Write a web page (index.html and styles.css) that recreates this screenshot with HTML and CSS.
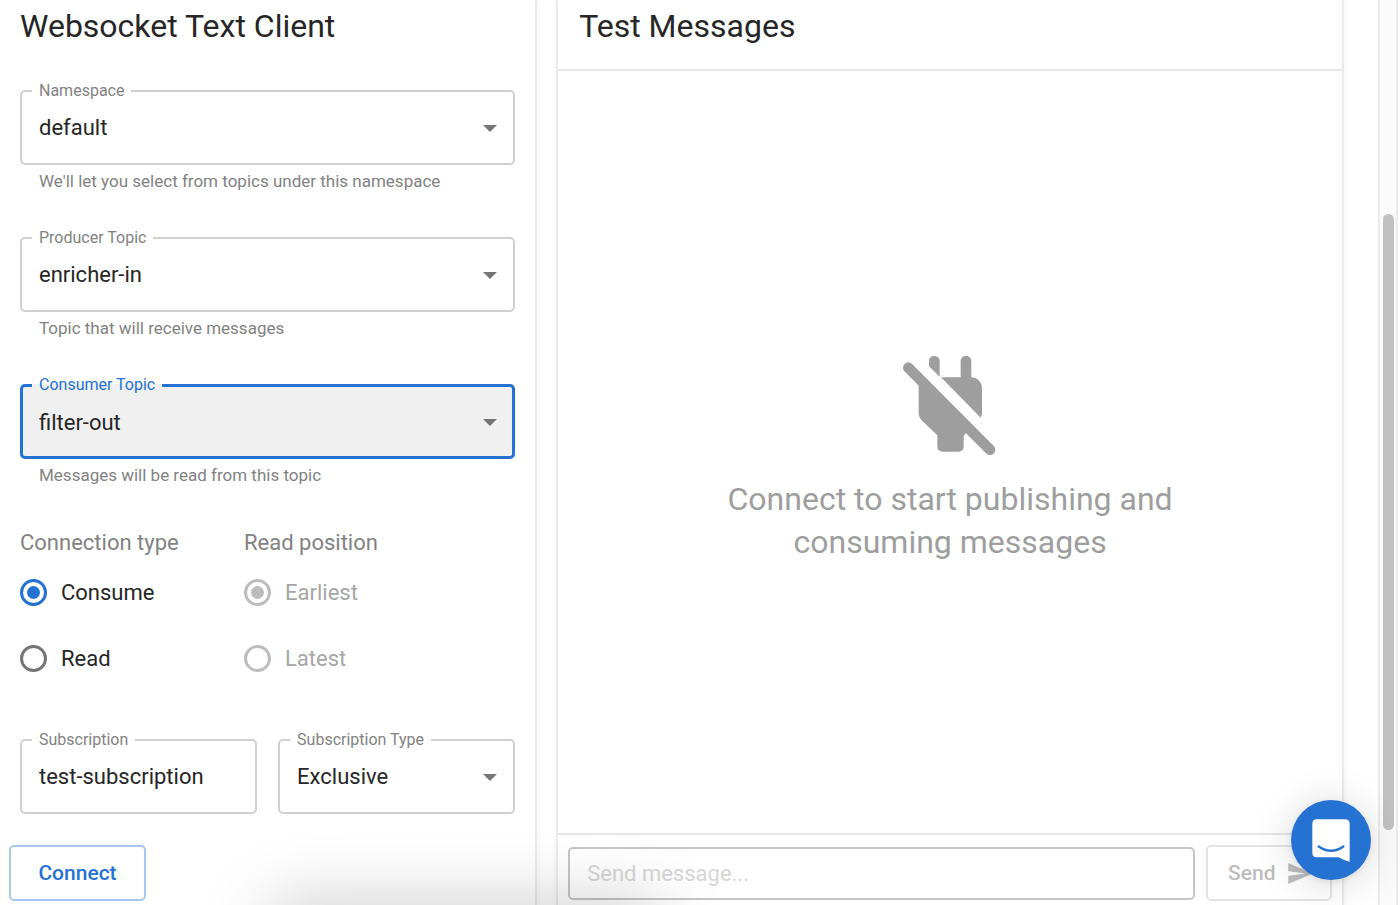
FILE: index.html
```html
<!DOCTYPE html>
<html lang="en">
  <head>
    <meta charset="UTF-8" />
    <meta name="viewport" content="width=device-width, initial-scale=1" />
    <title>Websocket Text Client</title>
    <link rel="stylesheet" href="styles.css">
  </head>
  <body>
    <div class="page">
      <main class="content">
        <form class="panel client">
          <h1 class="title">Websocket Text Client</h1>

          <fieldset class="field">
            <legend><label for="namespace">Namespace</label></legend>
            <div class="select-box">
              <select id="namespace"><option>default</option></select>
            </div>
          </fieldset>
          <p class="helper">We'll let you select from topics under this namespace</p>

          <fieldset class="field">
            <legend><label for="producer">Producer Topic</label></legend>
            <div class="select-box">
              <select id="producer"><option>enricher-in</option></select>
            </div>
          </fieldset>
          <p class="helper">Topic that will receive messages</p>

          <fieldset class="field focused">
            <legend><label for="consumer">Consumer Topic</label></legend>
            <div class="select-box">
              <select id="consumer"><option>filter-out</option></select>
            </div>
          </fieldset>
          <p class="helper">Messages will be read from this topic</p>

          <div class="radio-groups">
            <div role="radiogroup" aria-labelledby="connection-type">
              <div class="group-label" id="connection-type">Connection type</div>
              <label class="radio"><input type="radio" name="connection" checked />Consume</label>
              <label class="radio"><input type="radio" name="connection" />Read</label>
            </div>
            <div role="radiogroup" aria-labelledby="read-position">
              <div class="group-label" id="read-position">Read position</div>
              <label class="radio disabled"><input type="radio" name="position" checked disabled />Earliest</label>
              <label class="radio disabled"><input type="radio" name="position" disabled />Latest</label>
            </div>
          </div>

          <div class="subscription">
            <fieldset class="field">
              <legend><label for="subscription">Subscription</label></legend>
              <input type="text" id="subscription" value="test-subscription" />
            </fieldset>
            <fieldset class="field">
              <legend><label for="subscription-type">Subscription Type</label></legend>
              <div class="select-box">
                <select id="subscription-type"><option>Exclusive</option></select>
              </div>
            </fieldset>
          </div>

          <button type="button" class="btn connect-btn">Connect</button>
        </form>

        <section class="panel messages">
          <header class="messages-header">
            <h2 class="title">Test Messages</h2>
          </header>
          <div class="empty">
            <!-- power off -->
            <svg class="empty-icon" viewBox="120 70 300 315" aria-hidden="true">
              <path d="M207 110V94a16 16 0 0 1 32 0v47z" />
              <path d="M243 143h59V94a16 16 0 0 1 32 0v49a32 32 0 0 1 32 32v75q0 8-4 14z" />
              <path d="M176 160v90q0 12 8 21l48 46v33q0 16 16 16h47q16 0 16-16v-32l8-9z" />
              <path class="slash" d="M145 114l245 246" />
            </svg>
            <p class="empty-text">Connect to start publishing and consuming messages</p>
          </div>
          <div class="composer">
            <input type="text" class="message-input" placeholder="Send message..." aria-label="Message" />
            <button type="button" class="btn send-btn" disabled>
              Send
              <svg class="send-icon" viewBox="2 3 21 18" aria-hidden="true">
                <path d="M2.01 21L23 12 2.01 3 2 10l15 2-15 2z" />
              </svg>
            </button>
          </div>
        </section>
      </main>

      <div class="scrollbar"><div class="thumb"></div></div>
    </div>

    <div class="bottom-shadow"></div>

    <button type="button" class="chat-btn" aria-label="Open chat">
      <svg viewBox="396 116 115 128" aria-hidden="true">
        <path d="M410 116h86q14 0 14 14v114q-18-4-34-13h-66q-13 0-13-14v-87q0-14 13-14z" />
        <path class="smile" d="M416 198q38 26 75 0" />
      </svg>
    </button>
  </body>
</html>
```

FILE: styles.css
```css
* {
  box-sizing: border-box;
}

body {
  margin: 0;
  font-family: Roboto, "Liberation Sans", sans-serif;
  color: #262626;
  background: #fff;
  overflow: hidden;
}

.page {
  display: flex;
  height: 100vh;
  padding-right: 2px;
}

.content {
  flex: 1;
  display: grid;
  grid-template-columns: 15fr 22fr;
  gap: 19px;
  padding-right: 34px;
}

.panel {
  min-width: 0;
  border: 0 solid #ebebeb;
  box-shadow: 0 0 6px rgba(0, 0, 0, 0.06);
}

.title {
  margin: 0;
  font-size: 32px;
  font-weight: 400;
  line-height: 40px;
}

/* left side */
.client {
  padding: 6px 20px 4px;
  border-right-width: 2px;
}

.client .title {
  margin-bottom: 35px;
}

.field {
  min-width: 0;
  margin: 0;
  padding: 0 10px;
  border: 2px solid #d0d0d0;
  border-radius: 5px;
}

.field legend {
  padding: 0 7px;
  color: #828282;
  font-size: 16px;
  line-height: 20px;
}

.field select,
.field input {
  display: block;
  width: 100%;
  height: 70px;
  margin-top: -8px;
  padding: 0 7px 2px;
  border: none;
  outline: none;
  appearance: none;
  background: transparent;
  color: #262626;
  font-family: inherit;
  font-size: 22px;
}

.select-box {
  position: relative;
}

.select-box::after {
  content: "";
  position: absolute;
  top: 32px;
  right: 6px;
  border: 7px solid transparent;
  border-top-color: #757575;
  border-bottom: none;
  pointer-events: none;
}

.field.focused {
  padding: 0 9px;
  border: 3px solid #2572d3;
  background: #f0f0f0;
}

.field.focused legend {
  color: #2572d3;
}

.field.focused select {
  height: 69px;
  padding: 2px 7px 0;
}

.helper {
  margin: 6px 19px 37px;
  color: #828282;
  font-size: 17px;
  line-height: 20px;
}

.radio-groups {
  display: grid;
  grid-template-columns: 224px 1fr;
  margin-top: 46px;
  margin-bottom: 39px;
}

.group-label {
  margin-bottom: 4px;
  color: #828282;
  font-size: 22px;
  line-height: 24px;
}

.radio {
  display: flex;
  align-items: center;
  gap: 14px;
  height: 66px;
  font-size: 22px;
}

.radio input {
  appearance: none;
  width: 27px;
  height: 27px;
  margin: 0;
  padding: 4px;
  border: 3px solid #757575;
  border-radius: 50%;
}

.radio input:checked {
  border-color: #2572d3;
  background: #2572d3 content-box;
}

.radio.disabled {
  color: #a6a6a6;
}

.radio.disabled input {
  border-color: #bdbdbd;
}

.radio.disabled input:checked {
  background-color: #bdbdbd;
}

.subscription {
  display: grid;
  grid-template-columns: 1fr 1fr;
  gap: 21px;
  margin-bottom: 31px;
}

.btn {
  height: 56px;
  border: 2px solid #a6c8f0;
  border-radius: 5px;
  background: transparent;
  color: #2572d3;
  font-family: inherit;
  font-size: 21px;
  font-weight: 500;
}

.connect-btn {
  display: block;
  width: 137px;
  margin-left: -11px;
}

/* right side */
.messages {
  display: flex;
  flex-direction: column;
  border-left-width: 2px;
  border-right-width: 2px;
}

.messages-header {
  padding: 6px 21px 23px;
  border-bottom: 2px solid #e6e6e6;
}

.empty {
  flex: 1;
  display: flex;
  flex-direction: column;
  align-items: center;
  justify-content: center;
  gap: 20px;
  padding-top: 13px;
}

.empty-icon {
  width: 100px;
  height: 105px;
  fill: #9e9e9e;
}

.empty-icon .slash {
  stroke: #9e9e9e;
  stroke-width: 32;
  stroke-linecap: round;
}

.empty-text {
  max-width: 500px;
  margin: 0;
  color: #9e9e9e;
  font-size: 32px;
  line-height: 43px;
  text-align: center;
}

.composer {
  display: flex;
  align-items: center;
  gap: 11px;
  padding: 10px 10px 4px;
  border-top: 2px solid #e6e6e6;
}

.message-input {
  flex: 1;
  min-width: 0;
  height: 53px;
  padding: 0 17px;
  border: 2px solid #c6c6c6;
  border-radius: 5px;
  background: transparent;
  font-family: inherit;
  font-size: 22px;
}

.message-input::placeholder {
  color: #d6d6d6;
}

.send-btn {
  display: flex;
  align-items: center;
  gap: 12px;
  width: 126px;
  padding: 0 20px;
  border-color: #e4e4e4;
  color: #bdbdbd;
}

.send-icon {
  flex: none;
  width: 25px;
  height: 21px;
  fill: #bdbdbd;
}

.scrollbar {
  width: 20px;
  padding: 214px 3px 75px;
  border: solid #ebebeb;
  border-width: 0 2px;
  background: #fafafa;
}

.thumb {
  width: 11px;
  height: 100%;
  margin: 0 auto;
  border-radius: 6px;
  background: #c1c1c1;
}

/* overlays */
.bottom-shadow {
  position: fixed;
  bottom: -50px;
  left: 270px;
  width: 390px;
  height: 50px;
  box-shadow: 0 0 70px rgba(0, 0, 0, 0.24);
  pointer-events: none;
}

.chat-btn {
  position: fixed;
  right: 29px;
  bottom: 25px;
  display: flex;
  align-items: center;
  justify-content: center;
  width: 80px;
  height: 80px;
  padding: 0;
  border: none;
  border-radius: 50%;
  background: #2572d3;
  box-shadow: 0 2px 8px rgba(0, 0, 0, 0.08), 0 3px 42px rgba(0, 0, 0, 0.16);
}

.chat-btn svg {
  width: 38px;
  height: 43px;
  fill: #fff;
}

.chat-btn .smile {
  fill: none;
  stroke: #2572d3;
  stroke-width: 7;
  stroke-linecap: round;
}
```
